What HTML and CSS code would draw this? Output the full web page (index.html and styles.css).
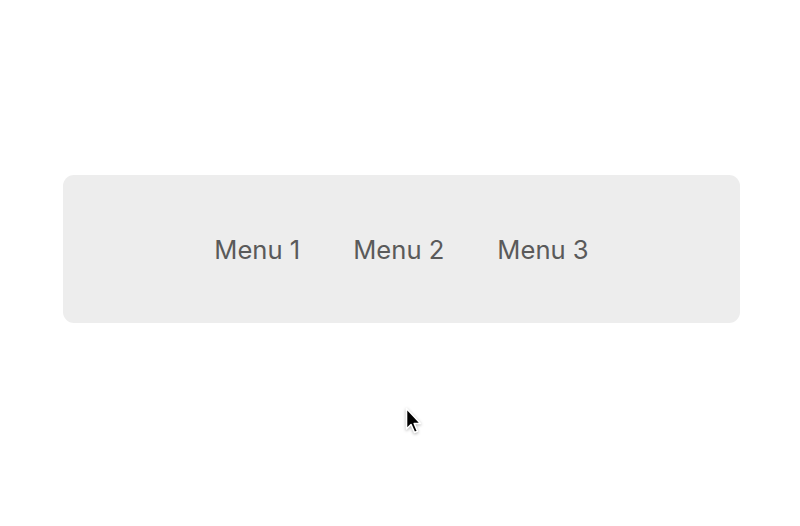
FILE: index.html
```html
<!DOCTYPE html>
<html>
<head>
<meta charset="utf-8">
<link rel="stylesheet" href="styles.css">
</head>
<body>
<div class="stage">
  <nav class="menu-bar">
    <span class="menu-item">Menu 1</span>
    <span class="menu-item">Menu 2</span>
    <span class="menu-item">Menu 3</span>
  </nav>
</div>
<svg class="cursor" width="20" height="30" viewBox="0 0 20 30">
  <path d="M1.5 1.5 L1.5 22 L6 17.5 L9.5 25.5 L12.5 24.2 L9.2 16.5 L15.5 16.5 Z" fill="#000" stroke="#fff" stroke-width="1.6" stroke-linejoin="round"/>
</svg>
</body>
</html>
```
FILE: styles.css
```css
html, body {
  margin: 0;
  padding: 0;
  background: #ffffff;
}
body {
  width: 800px;
  height: 526px;
  position: relative;
  font-family: Inter, "Noto Sans", sans-serif;
}
.stage {
  padding-top: 175px;
  padding-left: 63px;
}
.menu-bar {
  width: 677px;
  height: 148px;
  background: #ededed;
  border-radius: 11px;
  display: flex;
  align-items: center;
  justify-content: center;
  gap: 53px;
}
.menu-item {
  font-size: 25.6px;
  line-height: 30px;
  color: #5a5a5a;
  padding-top: 2px;
}
.cursor {
  position: absolute;
  left: 405px;
  top: 407px;
  filter: drop-shadow(0 1px 1.5px rgba(0,0,0,0.3));
}
```
